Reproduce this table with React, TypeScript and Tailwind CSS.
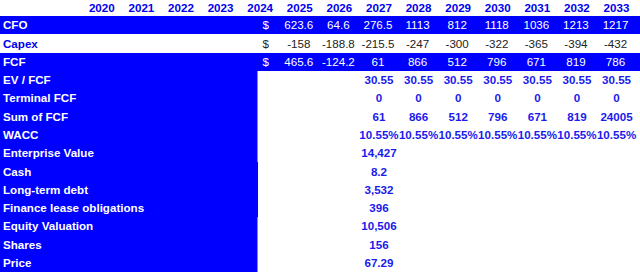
import React from 'react';

const YEARS = [2020, 2021, 2022, 2023, 2024, 2025, 2026, 2027, 2028, 2029, 2030, 2031, 2032, 2033];

const TOP_ROWS = [
  { label: 'CFO', dark: false, values: ['623.6', '64.6', '276.5', '1113', '812', '1118', '1036', '1213', '1217'] },
  { label: 'Capex', dark: true, values: ['-158', '-188.8', '-215.5', '-247', '-300', '-322', '-365', '-394', '-432'] },
  { label: 'FCF', dark: false, values: ['465.6', '-124.2', '61', '866', '512', '796', '671', '819', '786'] },
];

// values start in the 2025 column; '' means empty cell
const LOWER_ROWS = [
  { label: 'EV / FCF', edge: true, values: ['', '', '30.55', '30.55', '30.55', '30.55', '30.55', '30.55', '30.55'] },
  { label: 'Terminal FCF', edge: true, values: ['', '', '0', '0', '0', '0', '0', '0', '0'] },
  { label: 'Sum of FCF', edge: true, values: ['', '', '61', '866', '512', '796', '671', '819', '24005'] },
  { label: 'WACC', edge: true, values: ['', '', '10.55%', '10.55%', '10.55%', '10.55%', '10.55%', '10.55%', '10.55%'] },
  { label: 'Enterprise Value', edge: true, values: ['', '', '14,427'] },
  { label: 'Cash', edge: false, values: ['', '', '8.2'] },
  { label: 'Long-term debt', edge: false, values: ['', '', '3,532'] },
  { label: 'Finance lease obligations', edge: false, values: ['', '', '396'] },
  { label: 'Equity Valuation', edge: true, values: ['', '', '10,506'] },
  { label: 'Shares', edge: true, values: ['', '', '156'] },
  { label: 'Price', edge: true, values: ['', '', '67.29'] },
];

export default function App() {
  return (
    <div
      className="w-[640px] h-[272px] flex flex-col bg-white text-[11.6px] leading-none overflow-hidden"
      style={{ fontFamily: '"Liberation Sans", Arial, sans-serif' }}
    >
      {/* Header */}
      <div className="h-[16px] flex items-center font-bold text-[#0000ee]">
        <div className="w-[82px] shrink-0" />
        {YEARS.map((y) => (
          <div key={y} className="w-[39.6px] shrink-0 text-center">
            {y}
          </div>
        ))}
      </div>

      {TOP_ROWS.map((row) => (
        <div
          key={row.label}
          className={`flex-1 flex items-center ${row.dark ? 'bg-white' : 'bg-[#0000ff] text-white'}`}
        >
          <div className={`w-[82px] shrink-0 pl-[3px] font-bold ${row.dark ? 'text-[#0000ee]' : ''}`}>
            {row.label}
          </div>
          <div className="w-[158.4px] shrink-0" />
          <div className={`w-[39.6px] shrink-0 text-right pr-[11px] ${row.dark ? 'text-[#222]' : ''}`}>$</div>
          {row.values.map((v, i) => (
            <div key={i} className={`w-[39.6px] shrink-0 text-center pr-[2px] ${row.dark ? 'text-[#222]' : ''}`}>
              {v}
            </div>
          ))}
        </div>
      ))}

      {LOWER_ROWS.map((row) => (
        <div key={row.label} className="flex-1 flex items-stretch">
          <div
            className={`w-[258px] shrink-0 bg-[#0000ff] text-white font-bold pl-[3px] flex items-center ${
              row.edge ? 'border-r border-[#8080ff]' : ''
            }`}
          >
            {row.label}
          </div>
          <div className="w-[22px] shrink-0" />
          {row.values.map((v, i) => (
            <div
              key={i}
              className="w-[39.6px] shrink-0 flex items-center justify-center font-bold text-[#1a1aee] whitespace-nowrap"
            >
              {v}
            </div>
          ))}
        </div>
      ))}
    </div>
  );
}
